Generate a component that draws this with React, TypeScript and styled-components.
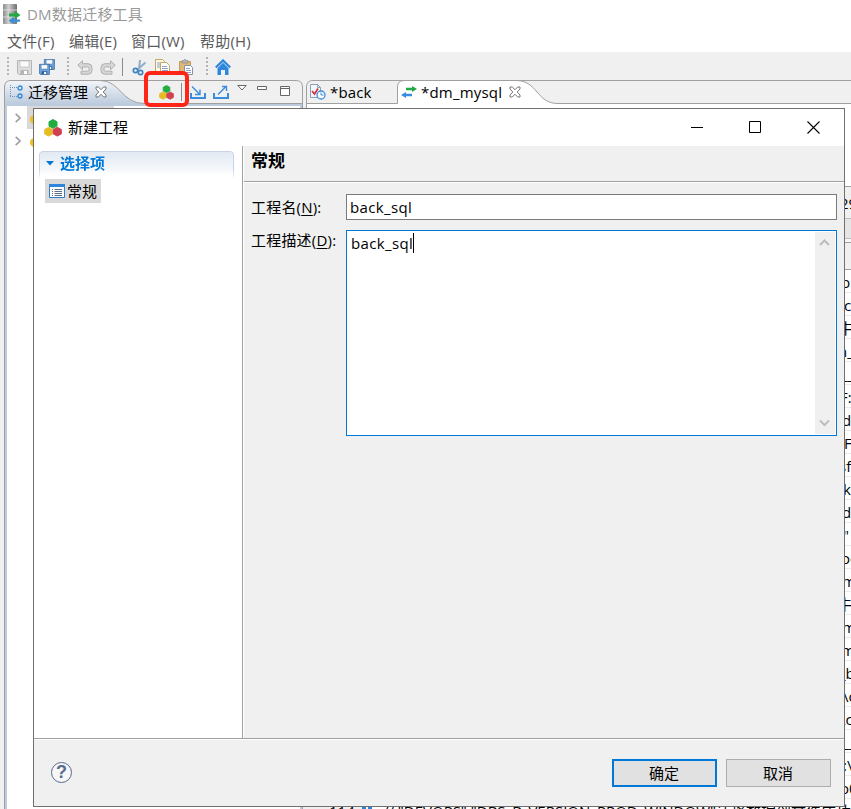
import React from "react";
import styled, { createGlobalStyle, css } from "styled-components";

const GlobalStyle = createGlobalStyle`
  *, *::before, *::after { box-sizing: border-box; }
  body {
    margin: 0;
    overflow: hidden;
    background: #f0f0f0;
    color: #000;
    font: 15px/20px "Open Sans", "Noto Sans CJK SC", sans-serif;
  }
  svg { display: block; flex: none; }
`;

/* ---------- main window ---------- */

const Window = styled.div`
  position: relative;
  display: flex;
  flex-direction: column;
  width: 851px;
  height: 809px;
  overflow: hidden;
  white-space: nowrap;
`;

const TitleBar = styled.header`
  display: flex;
  align-items: center;
  flex: none;
  gap: 6px;
  height: 29px;
  padding: 0 0 2px 3px;
  background: #fff;
  color: #999;
  letter-spacing: 0.2px;
`;

const MenuBar = styled.nav`
  display: flex;
  flex: none;
  align-items: center;
  height: 23px;
  padding: 0 0 0 7px;
  background: #fff;
  color: #5a5a5a;
`;

const MenuItem = styled.span<{ $width: number }>`
  width: ${(p) => p.$width}px;
  letter-spacing: 0.2px;
`;

const ToolBar = styled.div`
  display: flex;
  flex: none;
  align-items: center;
  height: 28px;
  padding: 2px 0 0 7px;
  background: #f0f0f0;
`;

const Slot = styled.span<{ $gap?: number; $lift?: number }>`
  flex: none;
  margin-left: ${(p) => p.$gap ?? 0}px;
  margin-bottom: ${(p) => p.$lift ?? 0}px;
`;

const Grip = styled.span<{ $gap?: number }>`
  width: 2px;
  height: 20px;
  margin-left: ${(p) => p.$gap ?? 0}px;
  background: repeating-linear-gradient(#b4b4b4 0 2px, transparent 2px 4px);
`;

const Separator = styled.span<{ $gap: number }>`
  width: 1px;
  height: 18px;
  margin-left: ${(p) => p.$gap}px;
  background: #8d8d8d;
`;

const Workbench = styled.main`
  display: flex;
  flex: 1;
  min-height: 0;
  gap: 3px;
  padding-left: 4px;
`;

const View = styled.section`
  display: flex;
  flex-direction: column;
  width: 299px;
`;

const Tabs = styled.div<{ $pad: number }>`
  position: relative;
  display: flex;
  align-items: center;
  flex: none;
  height: 24px;
  padding-left: ${(p) => p.$pad}px;

  > span { position: relative; }
`;

const TabShape = styled.svg`
  position: absolute;
  inset: 0;
`;

const TabLabel = styled.span<{ $gap: number; $width: number; $spacing?: number }>`
  margin-left: ${(p) => p.$gap}px;
  width: ${(p) => p.$width}px;
  letter-spacing: ${(p) => p.$spacing ?? 0}px;
`;

const TreeFrame = styled.div`
  display: flex;
  flex: 1;
  border: solid #a0a0a0;
  border-width: 0 1px;
`;

const Tree = styled.div`
  flex: 1;
  border: solid #bccbdd;
  border-width: 2px 2px 0;
  background: #fff;
`;

const TreeRow = styled.div`
  display: flex;
  align-items: center;
  height: 23px;
  padding-left: 7px;
`;

const TreeName = styled.div<{ $selected?: boolean }>`
  display: flex;
  align-items: center;
  width: 87px;
  height: 23px;
  margin-left: 5px;
  padding: 3px 0 0 3px;
  background: ${(p) => (p.$selected ? "#d9d9d9" : "transparent")};
`;

const Editor = styled.section`
  display: flex;
  flex: 1;
  min-width: 0;
  flex-direction: column;
`;

const EditorTop = styled.div`
  flex: none;
  height: 82px;
  border-left: 1px solid #a0a0a0;
  background: #fff;
`;

const EditorBars = styled.div`
  display: flex;
  flex: none;
  flex-direction: column;
  height: 84px;
  border: solid #a0a0a0;
  border-width: 1px 0;
  background: #f0f0f0;
`;

const CountBar = styled.div`
  height: 31px;
  padding: 6px 0 0 534px;
`;

const HeaderCell = styled.div`
  height: 21px;
  border: solid #bdbdbd;
  border-width: 1px 0;
  background: #e5e5e5;
`;

const HeaderGap = styled.div`
  height: 4px;
  border-bottom: 1px solid #a0a0a0;
  background: #f7f7f7;
`;

const LogRow = styled.div<{ $shift: number }>`
  flex: none;
  height: 23px;
  padding-left: ${(p) => 536 + p.$shift}px;
  border-bottom: 1px solid #ebebeb;
  overflow: hidden;
  background: #fff;
  line-height: 25px;
`;

const LastRow = styled.div`
  display: flex;
  flex: none;
  align-items: center;
  height: 23px;
  padding-left: 23px;
  background: linear-gradient(90deg, #f0f0f0 61px, #a0a0a0 61px 62px, #fff 62px);
`;

const LineNo = styled.span`
  width: 45px;
`;

const LogIcon = styled.span`
  width: 10px;
  height: 13px;
  flex: none;
  margin-right: 11px;
  background: linear-gradient(90deg, #2c82d8 4px, #fff 4px 6px, #2c82d8 6px);
`;

const Highlight = styled.div`
  position: absolute;
  left: 144px;
  top: 71px;
  width: 45px;
  height: 36px;
  border: 4px solid #ff2617;
  border-radius: 6px;
`;

/* ---------- dialog ---------- */

const Dialog = styled.div`
  position: absolute;
  left: 33px;
  top: 108px;
  display: flex;
  flex-direction: column;
  width: 812px;
  height: 699px;
  border: 1px solid #707070;
  background: #f0f0f0;
`;

const DialogTitle = styled.div`
  display: flex;
  align-items: center;
  flex: none;
  height: 37px;
  padding-left: 10px;
  background: #fff;
`;

const DialogName = styled.span`
  flex: 1;
  margin: 0 0 2px 6px;
`;

const WindowControls = styled.div`
  display: flex;
  gap: 45px;
  margin-right: 24px;
`;

const DialogBody = styled.div`
  display: flex;
  flex: none;
  height: 592px;
`;

const Sidebar = styled.aside`
  width: 209px;
  padding: 5px 8px 0 5px;
  border-right: 1px solid #a0a0a0;
  background: #fff;
`;

const GroupHeader = styled.div`
  display: flex;
  align-items: center;
  gap: 6px;
  height: 27px;
  padding: 0 0 4px 6px;
  border: 1px solid #c8d4e4;
  border-bottom: 0;
  border-radius: 4px 4px 0 0;
  background: linear-gradient(#e2e9f3, #fff);
  color: #0078d7;
  font-weight: 700;
  mask-image: linear-gradient(#000 70%, rgba(0, 0, 0, 0.1));
`;

const OptionItem = styled.div`
  display: flex;
  align-items: center;
  gap: 2px;
  width: 56px;
  height: 24px;
  margin: 1px 0 0 6px;
  padding-left: 4px;
  background: #d9d9d9;
`;

const Content = styled.div`
  flex: 1;
  border-left: 1px solid #fff;
`;

const ContentTitle = styled.h1`
  height: 36px;
  margin: 0;
  padding: 5px 0 0 7px;
  border-bottom: 1px solid #a0a0a0;
  box-shadow: 0 1px #fff;
  font-size: 17px;
  font-weight: 700;
  line-height: 20px;
`;

const Form = styled.div`
  display: grid;
  grid-template-columns: 95px 491px;
  grid-template-rows: 26px 206px;
  row-gap: 10px;
  padding: 12px 0 0 7px;
`;

const Label = styled.label<{ $top: number }>`
  padding-top: ${(p) => p.$top}px;
  letter-spacing: 0.2px;
`;

const Mnemonic = styled.span`
  text-decoration: underline;
  text-underline-offset: 2px;
`;

const fieldBase = css`
  background: #fff;
  letter-spacing: 0.35px;
`;

const TextField = styled.div`
  ${fieldBase}
  padding: 2px 3px;
  border: 1px solid #7a7a7a;
`;

const TextArea = styled.div`
  ${fieldBase}
  display: flex;
  justify-content: space-between;
  padding: 1px 1px 1px 4px;
  border: 1px solid #0078d7;
`;

const TextValue = styled.div`
  display: flex;
  height: 20px;
  margin-top: 1px;
`;

const Caret = styled.span`
  width: 1px;
  height: 20px;
  background: #000;
`;

const ScrollBar = styled.div`
  display: flex;
  flex-direction: column;
  justify-content: space-between;
  align-items: center;
  width: 20px;
  padding: 7px 2px 7px 0;
  background: #f0f0f0;
`;

const Footer = styled.footer`
  display: flex;
  flex: 1;
  align-items: center;
  padding: 1px 13px 0 16px;
  border-top: 1px solid #a0a0a0;
  box-shadow: inset 0 1px #fff;
`;

const Spacer = styled.span`
  flex: 1;
`;

const Button = styled.button<{ $primary?: boolean }>`
  width: 105px;
  height: 28px;
  margin-left: 9px;
  padding: 0 1px 1px 0;
  border: ${(p) => (p.$primary ? "2px solid #0078d7" : "1px solid #adadad")};
  background: #e1e1e1;
  color: #000;
  font: inherit;
`;

/* ---------- icons ---------- */

const AppIcon = () => (
  <svg width="18" height="20" viewBox="0 0 18 20">
    <defs>
      <linearGradient id="metal">
        <stop offset="0" stopColor="#8a8a8a" />
        <stop offset=".4" stopColor="#d0d0d0" />
        <stop offset="1" stopColor="#6c6c6c" />
      </linearGradient>
    </defs>
    <rect x="0" y="0" width="14" height="20" rx="1" fill="url(#metal)" />
    <path d="M0 6h14M0 13h14" stroke="#e4e4e4" strokeWidth=".8" />
    <path d="M6 9.500h6V7l5.500 4-5.500 4v-2.500H6z" fill="#23a845" />
    <path d="M17 15.500h-6V13l-5.500 3.700L11 20v-2.200h6z" fill="#3a8ee0" />
  </svg>
);

const Disk = ({ color, light }: { color: string; light: string }) => (
  <g>
    <path d="M.5.500h14v14H2L.5 13z" fill={light} stroke={color} />
    <path d="M3 1h9v6H3z" fill="#fafafa" stroke={color} strokeWidth=".6" />
    <path d="M3.500 10h8v4.500h-8z" fill={color} />
    <path d="M7 11h3v3H7z" fill="#fff" />
  </g>
);

const SaveIcon = () => (
  <svg width="15" height="15" viewBox="0 0 15 15"><Disk color="#b5b5b5" light="#dedede" /></svg>
);

const SaveAllIcon = () => (
  <svg width="16" height="16" viewBox="0 0 16 16">
    <g transform="translate(5 0) scale(.72)"><Disk color="#2f659f" light="#6fa3da" /></g>
    <g transform="translate(0 5) scale(.72)"><Disk color="#2f659f" light="#6fa3da" /></g>
  </svg>
);

const UndoIcon = ({ flip }: { flip?: boolean }) => (
  <svg width="16" height="15" viewBox="0 0 16 15">
    <path
      transform={flip ? "translate(16 0) scale(-1 1)" : undefined}
      d="M5.500.700v3H11q4 0 4 4v3q0 3.500-4 3.500H4v-3h6.500q1.500 0 1.500-1.200V8.500Q12 7 10.500 7h-5v2.700L.8 5.200z"
      fill="#d6d6d6" stroke="#b0b0b0"
    />
  </svg>
);

const CutIcon = () => (
  <svg width="15" height="17" viewBox="0 0 15 17" fill="none">
    <path d="M8 1L7 10M13.500 3.500L5 11" stroke="#8fadc9" strokeWidth="2" />
    <circle cx="3.500" cy="11.500" r="2.200" stroke="#3f86c2" strokeWidth="1.700" />
    <circle cx="8.500" cy="13.500" r="2.200" stroke="#3f86c2" strokeWidth="1.700" />
  </svg>
);

const CopyIcon = () => (
  <svg width="16" height="16" viewBox="0 0 16 16">
    <path d="M.5.500h7l2 2v10h-9z" fill="#fff7df" stroke="#c2a766" />
    <path d="M2 4h3M2 6h3M2 8h3" stroke="#8ba5c9" />
    <path d="M5.500 3.500h6l3 3v9h-9z" fill="#fff" stroke="#c2a766" />
    <path d="M7 7.500h5M7 9.500h6M7 11.500h6M7 13.500h6" stroke="#8ba5c9" />
  </svg>
);

const PasteIcon = () => (
  <svg width="15" height="16" viewBox="0 0 15 16">
    <path d="M.5 2.500h11v12H.5z" fill="#dfb876" stroke="#c39b5c" />
    <path d="M3 1.500h2L6 0l1 1.500h2V4H3z" fill="#b5b5b5" stroke="#858585" strokeWidth=".6" />
    <path d="M5.500 6.500h6l2 2v7h-8z" fill="#fff" stroke="#8194ae" />
    <path d="M7 9.500h4M7 11.500h5M7 13.500h5" stroke="#8ba5c9" />
  </svg>
);

const HomeIcon = () => (
  <svg width="16" height="16" viewBox="0 0 16 16">
    <path d="M.8 8.500L8 1.400l7.200 7.100" fill="none" stroke="#2d87dc" strokeWidth="2.200" />
    <path d="M2.500 9.200L8 3.800l5.500 5.400V16H10v-5H6v5H2.500z" fill="#2d87dc" />
  </svg>
);

const BallsIcon = ({ size }: { size: number }) => (
  <svg width={size} height={size} viewBox="0 0 18 18">
    <path d="M9 .500l4 2.200v4.400L9 9.300 5 7.100V2.700z" fill="#23ad40" stroke="#23ad40" strokeLinejoin="round" />
    <path d="M4.700 8.300l4 2.200v4.400l-4 2.200-4-2.200v-4.400z" fill="#e6bd27" stroke="#e6bd27" strokeLinejoin="round" />
    <path d="M13.300 8.300l4 2.200v4.400l-4 2.200-4-2.200v-4.400z" fill="#d13f52" stroke="#d13f52" strokeLinejoin="round" />
  </svg>
);

const TreeTabIcon = () => (
  <svg width="15" height="16" viewBox="0 0 15 16" fill="none">
    <path d="M1.500 1v12M1 3.500h8M1 12.500h8" stroke="#6595c5" strokeDasharray="1 1" />
    <circle cx="11" cy="4" r="2" stroke="#2f87d5" strokeWidth="1.300" />
    <circle cx="11" cy="12" r="2" stroke="#2f87d5" strokeWidth="1.300" />
  </svg>
);

const CloseTabIcon = () => (
  <svg width="12" height="12" viewBox="0 0 12 12">
    <path d="M1 1h2.300L6 3.700 8.700 1H11v2L8.200 6 11 9v2H8.700L6 8.300 3.300 11H1V9l2.800-3L1 3z" fill="#fff" stroke="#666" strokeWidth=".9" />
  </svg>
);

const TransferIcon = ({ out }: { out?: boolean }) => (
  <svg width="16" height="15" viewBox="0 0 16 15" fill="none" stroke="#3a8dde">
    <path d="M1 8v5h14V8" strokeWidth="2" />
    {out ? <path d="M5 9.500l8-8M9 1.500h4.500V6" strokeWidth="1.400" /> : <path d="M2 1.500l7.500 7.500M10 4.500V9.500H5" strokeWidth="1.400" />}
  </svg>
);

const ViewMenuIcon = () => (
  <svg width="10" height="6" viewBox="0 0 10 6"><path d="M.8.500h8.400L5 5z" fill="#fff" stroke="#666" /></svg>
);

const MinIcon = () => (
  <svg width="10" height="4" viewBox="0 0 10 4"><path d="M.5.500h9v3h-9z" fill="#fff" stroke="#666" /></svg>
);

const MaxIcon = () => (
  <svg width="10" height="10" viewBox="0 0 10 10"><path d="M.5.500h9v9h-9zM1 2.500h8" fill="#fff" stroke="#666" /></svg>
);

const TaskIcon = () => (
  <svg width="16" height="16" viewBox="0 0 16 16" fill="none">
    <path d="M.5.500h7l3 3v10H.5z" fill="#f4f8fd" stroke="#8b9fbd" />
    <path d="M7.500.500v3h3" stroke="#8b9fbd" />
    <path d="M2 7l2.500 3L8 4.500" stroke="#d5303c" strokeWidth="1.700" />
    <circle cx="11" cy="11" r="4" fill="#fff" stroke="#3a8dde" strokeWidth="1.300" />
    <path d="M11 8.500V11h2.500" stroke="#3a8dde" />
  </svg>
);

const SwapIcon = () => (
  <svg width="16" height="12" viewBox="0 0 16 12">
    <path d="M5 1.700h6V0l5 3-5 3V4.300H5z" fill="#23a845" />
    <path d="M11 7.700H5V6L0 9l5 3v-1.700h6z" fill="#3a8dde" />
  </svg>
);

const ExpandIcon = () => (
  <svg width="8" height="10" viewBox="0 0 8 10"><path d="M1.700.800L6 5 1.700 9.200" fill="none" stroke="#a0a0a0" strokeWidth="1.700" /></svg>
);

const FolderDot = () => (
  <svg width="9" height="9" viewBox="0 0 9 9"><circle cx="4.500" cy="4.500" r="4.500" fill="#efbd24" /></svg>
);

const ListIcon = () => (
  <svg width="16" height="14" viewBox="0 0 16 14">
    <path d="M.5.500h15v13H.5z" fill="#fff" stroke="#2f7fc7" />
    <path d="M0 0h16v3H0z" fill="#2f87dc" />
    <path d="M3 5.500h1M3 7.500h1M3 9.500h1M3 11.500h1M5.500 5.500H13M5.500 7.500H13M5.500 9.500H13M5.500 11.500H13" stroke="#5d6f86" />
  </svg>
);

const Chevron = ({ down }: { down?: boolean }) => (
  <svg width="11" height="8" viewBox="0 0 11 8">
    <path d={down ? "M1 1.500l4.500 4.500L10 1.500" : "M1 6L5.500 1.500 10 6"} fill="none" stroke="#bdbdbd" strokeWidth="2" />
  </svg>
);

const HelpMark = styled.span`
  display: grid;
  place-items: center;
  width: 21px;
  height: 21px;
  margin: 0 0 2px 1px;
  border: 1px solid #546a8c;
  border-radius: 50%;
  background: #f7f7f7;
  color: #566d91;
  font: 700 18px/18px "Liberation Sans", sans-serif;
`;

const logLines: [string, number][] = [
  ["b.", -1], ["c", 2], ["牛", -4], ["n_", -4], ["__", -1], ["F:", -2], ["d", 0], ["F", 2], ["sf", -3],
  ["k", 1], ["d", 0], ["\"", 1], ["oo", -1], ["m", 0], ["牛", -5], ["m", 0], ["m", -1], ["_b", -3],
  ["\\c", 1], ["\\c", -2], ["__", 0], [":\\V", 1], ["o0", -2],
];

export default function App() {
  return (
    <Window>
      <GlobalStyle />
      <TitleBar><AppIcon />DM数据迁移工具</TitleBar>
      <MenuBar>
        <MenuItem $width={62}>文件(F)</MenuItem>
        <MenuItem $width={62}>编辑(E)</MenuItem>
        <MenuItem $width={69}>窗口(W)</MenuItem>
        <MenuItem $width={60}>帮助(H)</MenuItem>
      </MenuBar>
      <ToolBar>
        <Grip />
        <Slot $gap={8}><SaveIcon /></Slot>
        <Slot $gap={7}><SaveAllIcon /></Slot>
        <Grip $gap={12} />
        <Slot $gap={8}><UndoIcon /></Slot>
        <Slot $gap={7}><UndoIcon flip /></Slot>
        <Separator $gap={6} />
        <Slot $gap={9}><CutIcon /></Slot>
        <Slot $gap={8}><CopyIcon /></Slot>
        <Slot $gap={8}><PasteIcon /></Slot>
        <Grip $gap={12} />
        <Slot $gap={7}><HomeIcon /></Slot>
      </ToolBar>

      <Workbench>
        <View>
          <Tabs $pad={5}>
            <TabShape width="299" height="24" viewBox="0 0 299 24">
              <defs>
                <linearGradient id="tabFill" x2="0" y2="1">
                  <stop offset="0" stopColor="#f2f5f9" />
                  <stop offset="1" stopColor="#bccbdd" />
                </linearGradient>
              </defs>
              <path d="M.5 24V7Q.5.500 7 .500H96C116 .500 118 23.500 140 23.500V24z" fill="url(#tabFill)" />
              <path d="M.5 24V7Q.5.500 7 .500H292Q298.500.500 298.500 7V24M96 .500C116 .500 118 23.500 140 23.500H298" fill="none" stroke="#a0a0a0" />
            </TabShape>
            <Slot><TreeTabIcon /></Slot>
            <TabLabel $gap={4} $width={60}>迁移管理</TabLabel>
            <Slot $gap={7}><CloseTabIcon /></Slot>
            <Slot $gap={52}><BallsIcon size={15} /></Slot>
            <Separator $gap={7} />
            <Slot $gap={8}><TransferIcon /></Slot>
            <Slot $gap={7}><TransferIcon out /></Slot>
            <Slot $gap={8} $lift={8}><ViewMenuIcon /></Slot>
            <Slot $gap={10} $lift={8}><MinIcon /></Slot>
            <Slot $gap={13} $lift={2}><MaxIcon /></Slot>
          </Tabs>
          <TreeFrame>
            <Tree>
              <TreeRow><ExpandIcon /><TreeName $selected><FolderDot /></TreeName></TreeRow>
              <TreeRow><ExpandIcon /><TreeName><FolderDot /></TreeName></TreeRow>
            </Tree>
          </TreeFrame>
        </View>

        <Editor>
          <Tabs $pad={4}>
            <TabShape width="545" height="24" viewBox="0 0 545 24">
              <path d="M91.500 24V7Q91.500.500 98 .500H210C232 .500 230 23.500 252 23.500V24z" fill="#fff" />
              <path d="M.5 24V7Q.5.500 7 .500H545M.5 23.500H91.500V7Q91.500.500 98 .500M210 .500C232 .500 230 23.500 252 23.500H545" fill="none" stroke="#a0a0a0" />
            </TabShape>
            <Slot><TaskIcon /></Slot>
            <TabLabel $gap={4} $width={67} $spacing={0.15}>*back</TabLabel>
            <Slot $gap={4}><SwapIcon /></Slot>
            <TabLabel $gap={4} $width={83} $spacing={0.2}>*dm_mysql</TabLabel>
            <Slot $gap={5}><CloseTabIcon /></Slot>
          </Tabs>
          <EditorTop />
          <EditorBars>
            <CountBar>29</CountBar>
            <HeaderCell />
            <HeaderGap />
          </EditorBars>
          {logLines.map(([text, shift], i) => (
            <LogRow key={i} $shift={shift}>{text}</LogRow>
          ))}
          <LastRow>
            <LineNo>114</LineNo>
            <LogIcon />
            // "DEVOPS"."DBS_B_VERSION_PROD_WINDOW"迁移数据到文件成功
          </LastRow>
        </Editor>
      </Workbench>

      <Dialog>
        <DialogTitle>
          <BallsIcon size={18} />
          <DialogName>新建工程</DialogName>
          <WindowControls>
            <svg width="13" height="13" viewBox="0 0 13 13"><path d="M0 6.500h12" stroke="#000" /></svg>
            <svg width="13" height="13" viewBox="0 0 13 13"><path d="M.5.500h11v11H.5z" fill="none" stroke="#000" /></svg>
            <svg width="13" height="13" viewBox="0 0 13 13"><path d="M.5.500l12 12M12.500.500l-12 12" stroke="#000" strokeWidth="1.100" /></svg>
          </WindowControls>
        </DialogTitle>
        <DialogBody>
          <Sidebar>
            <GroupHeader>
              <svg width="8" height="5" viewBox="0 0 8 5"><path d="M0 0h8L4 4.500z" fill="#0078d7" /></svg>
              选择项
            </GroupHeader>
            <OptionItem><ListIcon />常规</OptionItem>
          </Sidebar>
          <Content>
            <ContentTitle>常规</ContentTitle>
            <Form>
              <Label $top={3}>工程名(<Mnemonic>N</Mnemonic>):</Label>
              <TextField>back_sql</TextField>
              <Label $top={0}>工程描述(<Mnemonic>D</Mnemonic>):</Label>
              <TextArea>
                <TextValue>back_sql<Caret /></TextValue>
                <ScrollBar><Chevron /><Chevron down /></ScrollBar>
              </TextArea>
            </Form>
          </Content>
        </DialogBody>
        <Footer>
          <HelpMark>?</HelpMark>
          <Spacer />
          <Button $primary>确定</Button>
          <Button>取消</Button>
        </Footer>
      </Dialog>
      <Highlight />
    </Window>
  );
}
